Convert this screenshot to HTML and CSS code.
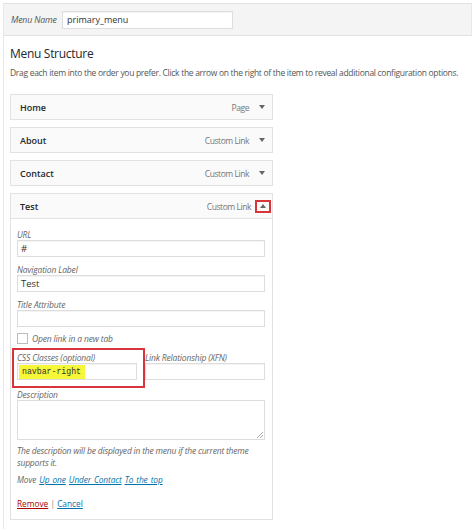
FILE: index.html
```html
<!DOCTYPE html>
<html>
<head>
<meta charset="utf-8">
<link rel="stylesheet" href="styles.css">
</head>
<body>
<div class="wrap">
  <div class="header">
    <span class="hlabel">Menu Name</span>
    <div class="hinput">primary_menu</div>
  </div>
  <div class="content">
    <h3 class="title">Menu Structure</h3>
    <p class="desc">Drag each item into the order you prefer. Click the arrow on the right of the item to reveal additional configuration options.</p>
    <div class="items">
      <div class="item">
        <div class="ihead"><span class="iname">Home</span><span class="itype">Page</span><span class="arrow down"></span></div>
      </div>
      <div class="item">
        <div class="ihead"><span class="iname">About</span><span class="itype">Custom Link</span><span class="arrow down"></span></div>
      </div>
      <div class="item">
        <div class="ihead"><span class="iname">Contact</span><span class="itype">Custom Link</span><span class="arrow down"></span></div>
      </div>
      <div class="item open">
        <div class="ihead"><span class="iname">Test</span><span class="itype">Custom Link</span><span class="arrowbox"><span class="arrow up"></span></span></div>
        <div class="ibody">
          <div class="field">
            <div class="flabel">URL</div>
            <div class="finput">#</div>
          </div>
          <div class="field">
            <div class="flabel">Navigation Label</div>
            <div class="finput">Test</div>
          </div>
          <div class="field">
            <div class="flabel">Title Attribute</div>
            <div class="finput"></div>
          </div>
          <div class="check"><span class="cbox"></span><span class="clabel">Open link in a new tab</span></div>
          <div class="tworow">
            <div class="half hl">
              <div class="flabel">CSS Classes (optional)</div>
              <div class="finput"><span class="mark">navbar-right</span></div>
            </div>
            <div class="half">
              <div class="flabel">Link Relationship (XFN)</div>
              <div class="finput"></div>
            </div>
          </div>
          <div class="field">
            <div class="flabel">Description</div>
            <div class="farea"><svg class="grip" width="6" height="6" viewBox="0 0 6 6"><path d="M6 0 L0 6 M6 3 L3 6" stroke="#999" stroke-width="0.8"/></svg></div>
          </div>
          <p class="help">The description will be displayed in the menu if the current theme supports it.</p>
          <div class="move">Move <a class="lnk">Up one</a> <a class="lnk">Under Contact</a> <a class="lnk">To the top</a></div>
          <div class="actions"><a class="rm">Remove</a> <span class="sep">|</span> <a class="lnk">Cancel</a></div>
        </div>
      </div>
    </div>
  </div>
</div>
</body>
</html>
```
FILE: styles.css
```css
html, body { margin: 0; padding: 0; background: #fff; }
body { font-family: "Open Sans", "Noto Sans", sans-serif; color: #444; }
.wrap {
  margin: 3px 2px 0 3px;
  border-left: 1px solid #e8e8e8;
  height: 526px;
}
.header {
  background: #f4f4f4;
  border-top: 1px solid #e2e2e2;
  border-bottom: 1px solid #e2e2e2;
  border-right: 1px solid #e8e8e8;
  height: 31px;
  display: flex;
  align-items: center;
  padding-left: 7px;
}
.hlabel { font-size: 8.8px; font-style: italic; color: #555; width: 51px; white-space: nowrap; letter-spacing: -0.2px; }
.hinput {
  width: 171px; height: 18px; box-sizing: border-box;
  background: #fff; border: 1px solid #ddd;
  font-size: 9px; color: #333; padding: 0 4px; line-height: 16px;
  box-shadow: inset 0 1px 1px rgba(0,0,0,0.05);
}
.content { padding-left: 6px; }
.title { margin: 10px 0 0; font-size: 12px; font-weight: 400; color: #23282d; line-height: 16px; letter-spacing: -0.3px; }
.desc { margin: 4px 0 0; font-size: 8.5px; color: #555; line-height: 13px; letter-spacing: -0.3px; white-space: nowrap; }
.items { margin-top: 15px; width: 263px; display: flex; flex-direction: column; gap: 7px; }
.item { border: 1px solid #e2e2e2; background: #fafafa; }
.ihead { height: 24px; display: flex; align-items: center; padding: 0 7px 0 9px; }
.iname { font-size: 9px; font-weight: 600; color: #23282d; flex: 1; }
.itype { font-size: 8.5px; color: #777; margin-right: 10px; letter-spacing: -0.45px; }
.arrow { width: 0; height: 0; border-left: 3px solid transparent; border-right: 3px solid transparent; }
.arrow.down { border-top: 4px solid #666; }
.arrow.up { border-bottom: 4px solid #666; }
.item.open .ihead { padding-right: 1px; }
.item.open .itype { margin-right: 4px; }
.arrowbox {
  width: 16px; height: 13px; box-sizing: border-box;
  border: 2px solid #d8353b;
  display: flex; align-items: center; justify-content: center;
}
.ibody { background: #fff; border-top: 1px solid #e2e2e2; padding: 10px 7px 9px 6px; }
.flabel { font-size: 8.5px; font-style: italic; color: #666; line-height: 11px; height: 11px; letter-spacing: -0.15px; white-space: nowrap; }
.finput {
  height: 17px; box-sizing: border-box; background: #fff;
  border: 1px solid #ddd; font-size: 9.5px; color: #333;
  padding: 0 3px; line-height: 15px; margin-bottom: 7px;
  box-shadow: inset 0 1px 1px rgba(0,0,0,0.05);
}
.check { display: flex; align-items: center; gap: 4px; margin-top: -1px; height: 11px; }
.cbox { width: 11px; height: 11px; box-sizing: border-box; border: 1px solid #bbb; background: #fff; }
.clabel { font-size: 8.5px; font-style: italic; color: #666; letter-spacing: -0.15px; }
.tworow { display: flex; margin-top: 8px; }
.tworow .finput { margin-bottom: 9px; }
.half { width: 120px; }
.half + .half { margin-left: 8px; }
.half.hl { position: relative; }
.half.hl::before {
  content: ""; position: absolute; left: -5px; top: -4px; width: 133px; height: 40px;
  border: 2px solid #d8353b; box-sizing: border-box;
}
.half.hl .finput { padding: 0 0 0 1px; display: flex; align-items: center; }
.mark {
  display: inline-block; background: #f7f73a; height: 14px; line-height: 14px;
  font-family: "Liberation Mono", "DejaVu Sans Mono", monospace; font-size: 8.2px; color: #333; padding: 0 4px 0 3px;
}
.farea { height: 40px; box-sizing: border-box; border: 1px solid #ddd; position: relative; }
.grip { position: absolute; right: 1px; bottom: 1px; }
.help { margin: 5px 0 0; font-size: 8.5px; font-style: italic; color: #666; line-height: 12px; letter-spacing: -0.2px; }
.move { margin-top: 5px; font-size: 8.3px; font-style: italic; color: #666; line-height: 12px; letter-spacing: -0.1px; word-spacing: 1px; }
.lnk { color: #0073aa; text-decoration: underline; }
.rm { color: #a00; text-decoration: underline; }
.actions { margin-top: 12px; font-size: 8.3px; line-height: 12px; }
.sep { color: #888; }
```
